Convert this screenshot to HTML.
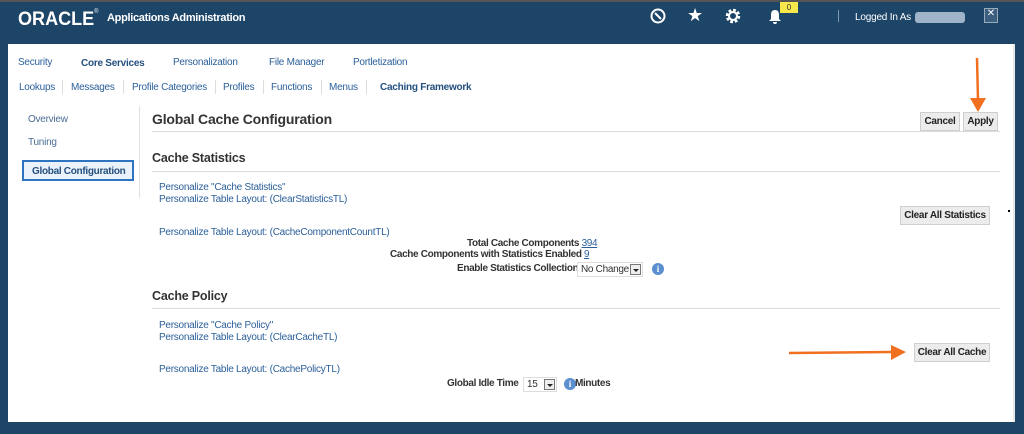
<!DOCTYPE html>
<html><head><style>
*{margin:0;padding:0;box-sizing:border-box}
body{width:1024px;height:434px;overflow:hidden;background:#1d4568;font-family:"Liberation Sans",Arial,sans-serif;position:relative}
.a{position:absolute;white-space:nowrap}
.lnk{color:#2b5f9a;font-size:10px;letter-spacing:-0.25px}
.btn{position:absolute;white-space:nowrap;background:#ececec;border:1px solid #cfcfcf;font-size:10px;letter-spacing:-0.3px;font-weight:bold;color:#222;text-align:center;line-height:18px}
.hl{position:absolute;height:1px;background:#dcdcdc}
.lbl{font-size:10px;letter-spacing:-0.35px;font-weight:bold;color:#333}
.sel{position:absolute;white-space:nowrap;overflow:hidden;border:1px solid #ddd;background:#fff;font-size:10px;letter-spacing:-0.3px;color:#333;line-height:13px;padding-left:3px}
.dd{position:absolute;width:11px;height:11px;border:1px solid #777;background:#eee}
.dd:after{content:"";position:absolute;left:2px;top:4px;border:3px solid transparent;border-top:3px solid #222}
.info{position:absolute;width:12px;height:12px;border-radius:50%;background:#5b8fd0;color:#fff;font-size:9px;font-weight:bold;text-align:center;line-height:12px;font-family:"Liberation Serif",serif}
</style></head><body>
<div class="a" style="left:0;top:0;width:1024px;height:2px;background:#555"></div>
<div class="a" style="left:18px;top:9px;color:#fff;font-size:19px;font-weight:bold;letter-spacing:0px;transform:scaleX(0.95);transform-origin:left">ORACLE<span style="font-size:6px;vertical-align:top;font-weight:normal">®</span></div>
<div class="a" style="left:107px;top:12px;color:#fff;font-size:11px;letter-spacing:-0.3px;font-weight:bold">Applications Administration</div>
<svg class="a" style="left:650px;top:8px" width="16" height="16" viewBox="0 0 16 16"><circle cx="8" cy="8" r="6.5" fill="none" stroke="#fff" stroke-width="2"/><line x1="5" y1="5" x2="11" y2="11" stroke="#fff" stroke-width="2"/></svg>
<div class="a" style="left:687px;top:5px;color:#fff;font-size:18px">★</div>
<svg class="a" style="left:724px;top:7px" width="18" height="18" viewBox="0 0 18 18"><circle cx="9" cy="9" r="5.5" fill="none" stroke="#fff" stroke-width="3.5" stroke-dasharray="2.6 1.7"/><circle cx="9" cy="9" r="4" fill="none" stroke="#fff" stroke-width="2"/></svg>
<svg class="a" style="left:768px;top:9px" width="14" height="16" viewBox="0 0 14 16"><path d="M7 1c-3 0-4 2-4 5v4l-2 2h12l-2-2V6c0-3-1-5-4-5zM5 13a2 2 0 004 0z" fill="#fff"/></svg>
<div class="a" style="left:780px;top:2px;width:18px;height:11px;background:#f6e84a;color:#333;font-size:8px;text-align:center;line-height:11px">0</div>
<div class="a" style="left:838px;top:10px;width:1px;height:12px;background:#7d98b3"></div>
<div class="a" style="left:855px;top:12px;color:#fff;font-size:10px;letter-spacing:-0.2px">Logged In As</div>
<div class="a" style="left:915px;top:12px;width:50px;height:11px;background:#9fb3c9;border-radius:3px"></div>
<div class="a" style="left:984px;top:8px;width:14px;height:15px;border:1px solid #9ab;background:#3d5f7f;color:#fff;font-size:10px;line-height:10px;text-align:center">✕</div>

<div class="a" style="left:8px;top:44px;width:1005px;height:378px;background:#fff"></div>
<div class="a" style="left:1013px;top:44px;width:2px;height:378px;background:#e8e8e8"></div>

<div class="a lnk" style="left:18px;top:57px">Security</div>
<div class="a lnk" style="left:81px;top:58px;font-weight:bold;color:#244f7f">Core Services</div>
<div class="a lnk" style="left:173px;top:57px">Personalization</div>
<div class="a lnk" style="left:269px;top:57px">File Manager</div>
<div class="a lnk" style="left:353px;top:57px">Portletization</div>

<div class="a lnk" style="left:19px;top:82px">Lookups</div>
<div class="a" style="left:62px;top:80px;width:1px;height:14px;background:#ddd"></div>
<div class="a lnk" style="left:71px;top:82px">Messages</div>
<div class="a" style="left:123px;top:80px;width:1px;height:14px;background:#ddd"></div>
<div class="a lnk" style="left:132px;top:82px">Profile Categories</div>
<div class="a" style="left:215px;top:80px;width:1px;height:14px;background:#ddd"></div>
<div class="a lnk" style="left:223px;top:82px">Profiles</div>
<div class="a" style="left:263px;top:80px;width:1px;height:14px;background:#ddd"></div>
<div class="a lnk" style="left:271px;top:82px">Functions</div>
<div class="a" style="left:321px;top:80px;width:1px;height:14px;background:#ddd"></div>
<div class="a lnk" style="left:329px;top:82px">Menus</div>
<div class="a" style="left:366px;top:80px;width:1px;height:14px;background:#ddd"></div>
<div class="a lnk" style="left:380px;top:82px;font-weight:bold;color:#244f7f">Caching Framework</div>

<div class="a lnk" style="left:28px;top:114px;color:#4a6d94">Overview</div>
<div class="a lnk" style="left:28px;top:137px;color:#4a6d94">Tuning</div>
<div class="a" style="left:22px;top:160px;width:112px;height:21px;border:2px solid #2f74c0;background:#eaf2fb;font-size:10px;letter-spacing:-0.3px;font-weight:bold;color:#244f7f;padding:4px 0 0 8px;white-space:nowrap">Global Configuration</div>
<div class="a" style="left:139px;top:106px;width:1px;height:92px;background:#e2e2e2"></div>

<div class="a" style="left:152px;top:111px;font-size:14px;letter-spacing:-0.2px;font-weight:bold;color:#333">Global Cache Configuration</div>
<div class="hl" style="left:152px;top:131px;width:848px"></div>
<div class="btn" style="left:920px;top:112px;width:40px;height:19px">Cancel</div>
<div class="btn" style="left:963px;top:112px;width:35px;height:19px">Apply</div>

<div class="a" style="left:152px;top:151px;font-size:12.5px;letter-spacing:-0.2px;font-weight:bold;color:#333">Cache Statistics</div>
<div class="hl" style="left:152px;top:171px;width:848px"></div>
<div class="a lnk" style="left:159px;top:182px">Personalize "Cache Statistics"</div>
<div class="a lnk" style="left:159px;top:194px">Personalize Table Layout: (ClearStatisticsTL)</div>
<div class="btn" style="left:900px;top:206px;width:90px;height:19px">Clear All Statistics</div>
<div class="a" style="left:1008px;top:210px;width:2px;height:2px;background:#000"></div>
<div class="a lnk" style="left:159px;top:227px">Personalize Table Layout: (CacheComponentCountTL)</div>
<div class="a lbl" style="left:467px;top:238px">Total Cache Components <span style="font-weight:normal;color:#2b5f9a;text-decoration:underline">394</span></div>
<div class="a lbl" style="left:390px;top:249px">Cache Components with Statistics Enabled <span style="font-weight:normal;color:#2b5f9a;text-decoration:underline">9</span></div>
<div class="a lbl" style="left:457px;top:263px">Enable Statistics Collection</div>
<div class="sel" style="left:577px;top:262px;width:66px;height:15px">No Change</div>
<div class="dd" style="left:630px;top:264px"></div>
<div class="info" style="left:652px;top:263px">i</div>

<div class="a" style="left:152px;top:289px;font-size:12.5px;letter-spacing:-0.2px;font-weight:bold;color:#333">Cache Policy</div>
<div class="hl" style="left:152px;top:308px;width:848px"></div>
<div class="a lnk" style="left:159px;top:320px">Personalize "Cache Policy"</div>
<div class="a lnk" style="left:159px;top:332px">Personalize Table Layout: (ClearCacheTL)</div>
<div class="btn" style="left:914px;top:343px;width:76px;height:19px">Clear All Cache</div>
<div class="a lnk" style="left:159px;top:364px">Personalize Table Layout: (CachePolicyTL)</div>
<div class="a lbl" style="left:447px;top:378px">Global Idle Time</div>
<div class="sel" style="left:523px;top:377px;width:34px;height:15px">15</div>
<div class="dd" style="left:544px;top:379px"></div>
<div class="info" style="left:564px;top:378px">i</div>
<div class="a lbl" style="left:575px;top:378px">Minutes</div>

<svg class="a" style="left:0;top:0" width="1024" height="434">
<line x1="977" y1="58" x2="978" y2="100" stroke="#f07020" stroke-width="2.5"/>
<polygon points="970,98 986,98 978,112" fill="#f07020"/>
<line x1="789" y1="353" x2="893" y2="352" stroke="#f07020" stroke-width="2.5"/>
<polygon points="891,345 891,360 906,352" fill="#f07020"/>
</svg>
</body></html>
